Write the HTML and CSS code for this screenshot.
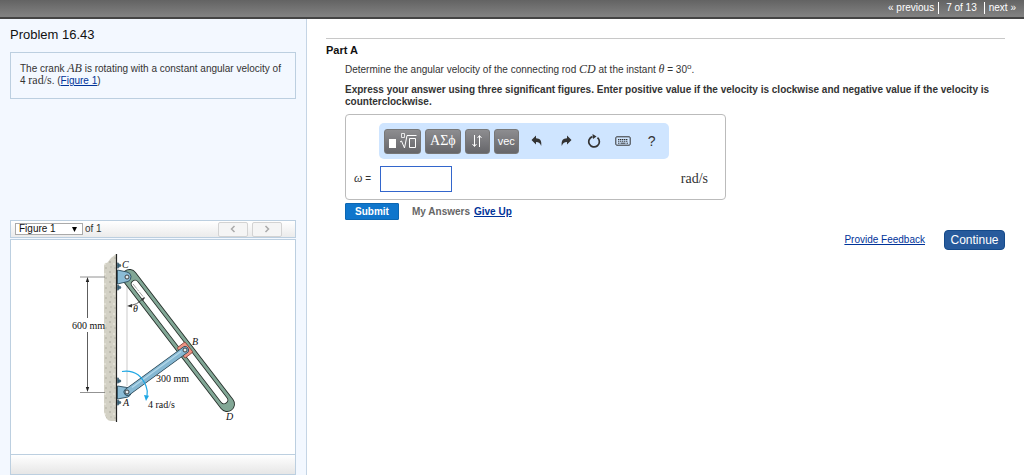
FILE: index.html
```html
<!DOCTYPE html>
<html lang="en">
<head>
    <meta charset="UTF-8">
    <meta name="viewport" content="width=device-width, initial-scale=1.0">
    <title>Problem 16.43</title>
    <link rel="stylesheet" href="styles.css">
</head>
<body>
    <nav class="topbar">
        <a href="#previous">« previous</a>
        <span class="count">7 of 13</span>
        <a href="#next">next »</a>
    </nav>

    <div class="page">
        <aside class="sidebar">
            <h1>Problem 16.43</h1>
            <div class="intro">
                The crank <i class="math">AB</i> is rotating with a constant angular velocity of 4 <span class="math">rad/s</span>. (<a href="#figure">Figure 1</a>)
            </div>

            <section class="figure" id="figure">
                <div class="figure-bar">
                    <select id="figureSelect" aria-label="Figure">
                        <option>Figure 1</option>
                    </select>
                    <label for="figureSelect">of 1</label>
                    <div class="figure-nav">
                        <button type="button" aria-label="Previous figure"><svg width="6" height="8" viewBox="0 0 6 8"><path d="M4.500 1L1.500 4l3 3"/></svg></button>
                        <button type="button" aria-label="Next figure"><svg width="6" height="8" viewBox="0 0 6 8"><path d="M1.500 1l3 3-3 3"/></svg></button>
                    </div>
                </div>
                <div class="figure-body">
                    <svg class="diagram" viewBox="11 240 284 214" role="img" aria-label="Crank AB and slotted rod CD">
                        <defs>
                            <pattern id="concrete" width="9" height="10" patternUnits="userSpaceOnUse">
                                <rect width="9" height="10" fill="#d3d1c5"/>
                                <circle cx="2" cy="2" r="0.900" fill="#b3b1a5"/>
                                <circle cx="6" cy="4" r="1" fill="#e6e4d9"/>
                                <circle cx="3" cy="7" r="0.800" fill="#bbb9ad"/>
                                <circle cx="7" cy="8" r="0.800" fill="#adab9f"/>
                            </pattern>
                        </defs>

                        <!-- wall -->
                        <path d="M116 254L111 258L107 263Q104 262 104 267V412Q106 421 111 421H116Z" fill="url(#concrete)"/>
                        <path d="M116.500 254V422" stroke="#222" stroke-width="1.200"/>

                        <!-- dimension 600 mm -->
                        <g stroke="#777" stroke-width="0.800">
                            <path d="M80 277H105M80 392.500H105"/>
                            <path d="M87.500 280V318M87.500 332V390" stroke="#333"/>
                        </g>
                        <path d="M87.500 277l-1.700 5h3.400zM87.500 392l-1.700-5h3.400z" fill="#222"/>
                        <path d="M127 283V386" stroke="#ddd" stroke-width="1.500"/>

                        <!-- rod CD -->
                        <path d="M129.500 277L227 404" stroke="#26302b" stroke-width="16" stroke-linecap="round"/>
                        <path d="M129.500 277L227 404" stroke="#82a796" stroke-width="14.200" stroke-linecap="round"/>
                        <path d="M135 284L224 400" stroke="#26302b" stroke-width="8.200" stroke-linecap="round"/>
                        <path d="M135 284L224 400" stroke="#fff" stroke-width="6.600" stroke-linecap="round"/>

                        <!-- angle -->
                        <path d="M133 284L145 299" stroke="#888" stroke-width="0.800" stroke-dasharray="6 1 2 1"/>
                        <path d="M129 306Q137 305 143 299" stroke="#333" stroke-width="0.800" fill="none"/>
                        <path d="M127 306l5-2v3.500zM145 297l-4 2 2 2z" fill="#333"/>

                        <!-- slider -->
                        <g transform="translate(185 350) rotate(52)">
                            <rect x="-6.500" y="-5" width="13" height="10" rx="1" fill="#ee9585" stroke="#7a3028" stroke-width="0.700"/>
                        </g>

                        <!-- brackets -->
                        <g fill="#8bbcd6" stroke="#29495a" stroke-width="0.900">
                            <path d="M117.500 270L127 272a5 5 0 0 1 1 9.500l-10.500 2.500zM117.500 386L127 387.500a5 5 0 0 1 1 9.500l-10.500 2z"/>
                            <g fill="#3c6c86" stroke-width="0.600">
                                <rect x="117.500" y="263" width="1" height="5"/><circle cx="119.500" cy="265.500" r="1.300"/>
                                <rect x="117.500" y="285" width="1" height="5"/><circle cx="119.500" cy="287.500" r="1.300"/>
                                <rect x="117.500" y="378" width="1" height="5"/><circle cx="119.500" cy="381" r="1.300"/>
                                <rect x="117.500" y="400" width="1" height="5"/><circle cx="119.500" cy="402.500" r="1.300"/>
                            </g>
                        </g>

                        <!-- crank AB -->
                        <path d="M127.500 392L185 350" stroke="#1f3b4a" stroke-width="7.600" stroke-linecap="round"/>
                        <path d="M127.500 392L185 350" stroke="#86b8d3" stroke-width="6.200" stroke-linecap="round"/>
                        <path d="M132 387.500L181 351.500" stroke="#b4d8e9" stroke-width="1.400"/>
                        <g fill="#e4eef2" stroke="#333" stroke-width="0.900">
                            <circle cx="127" cy="277" r="2"/>
                            <circle cx="127" cy="392" r="2"/>
                            <circle cx="185" cy="350" r="2"/>
                        </g>

                        <!-- rotation -->
                        <path d="M122 371.500Q139 369 146 386Q148 391 147 396" stroke="#1ea7e4" stroke-width="1.200" fill="none"/>
                        <path d="M146 401l-2-6 5 .8z" fill="#1ea7e4"/>

                        <g class="labels">
                            <text x="72" y="329">600 mm</text>
                            <text x="156" y="382">300 mm</text>
                            <text x="148" y="408">4 rad/s</text>
                            <g font-style="italic">
                                <text x="122" y="268">C</text>
                                <text x="133" y="312">θ</text>
                                <text x="192" y="345">B</text>
                                <text x="123" y="406">A</text>
                                <text x="226" y="420">D</text>
                            </g>
                        </g>
                    </svg>
                </div>
                <div class="figure-foot"></div>
            </section>
        </aside>

        <main class="content">
            <h2>Part A</h2>
            <div class="part">
                <p>Determine the angular velocity of the connecting rod <i class="math">CD</i> at the instant <i class="math">θ</i> = 30<sup>o</sup>.</p>
                <p class="instructions">Express your answer using three significant figures. Enter positive value if the velocity is clockwise and negative value if the velocity is counterclockwise.</p>

                <div class="answer-box">
                    <div class="toolbar">
                        <button type="button" class="key wide" aria-label="Templates">
                            <svg width="29" height="18" viewBox="0 0 29 18" fill="none" stroke="#fff">
                                <path d="M1 7h7v9H1z" fill="#fff" stroke="none"/>
                                <path d="M13.500 1.500h3v4h-3z" stroke-width="0.800"/>
                                <path d="M12 10l1.500-1 3 7L19 3.500h9.500"/>
                                <path d="M21.500 6.500h6v9h-6z"/>
                            </svg>
                        </button>
                        <button type="button" class="key wide greek">ΑΣϕ</button>
                        <button type="button" class="key" aria-label="Subscript and superscript">
                            <svg width="12" height="14" viewBox="0 0 12 14" fill="none" stroke="#fff">
                                <path d="M3.500 1v11M1.500 10l2 2.500 2-2.500M8.500 13V2M6.500 4l2-2.500 2 2.500"/>
                            </svg>
                        </button>
                        <button type="button" class="key">vec</button>
                        <button type="button" class="tool" aria-label="Undo">
                            <svg width="12" height="12" viewBox="0 0 12 12"><path d="M5 0.500V3.200C9 3.300 11 5.500 10.200 11C9.300 8 8 6.900 5 6.900V9.500L0.500 5z" fill="#333"/></svg>
                        </button>
                        <button type="button" class="tool" aria-label="Redo">
                            <svg width="12" height="12" viewBox="0 0 12 12"><path d="M7 0.500V3.200C3 3.300 1 5.500 1.800 11C2.700 8 4 6.900 7 6.900V9.500L11.500 5z" fill="#333"/></svg>
                        </button>
                        <button type="button" class="tool" aria-label="Reset">
                            <svg width="14" height="14" viewBox="0 0 14 14"><path d="M10.500 3.600A5.300 5.300 0 1 1 5.500 2.600" fill="none" stroke="#333" stroke-width="1.700"/><path d="M5.500 0L9.500 2.500 6 5z" fill="#333"/></svg>
                        </button>
                        <button type="button" class="tool" aria-label="Keyboard">
                            <svg width="16" height="10" viewBox="0 0 16 10" fill="none" stroke="#333">
                                <rect x="0.800" y="0.800" width="14.400" height="8.400" rx="1"/>
                                <path d="M3 3.500h10M3 5.200h10" stroke-dasharray="1.400 0.600"/>
                                <path d="M3 7.200h1.500M5.500 7.200h5M11.500 7.200H13"/>
                            </svg>
                        </button>
                        <button type="button" class="tool help">?</button>
                    </div>
                    <div class="answer-row">
                        <label for="answer"><i class="math">ω</i> =</label>
                        <input type="text" id="answer">
                        <span class="math unit">rad/s</span>
                    </div>
                </div>

                <div class="actions">
                    <button type="button" class="submit">Submit</button>
                    <span class="my-answers">My Answers</span>
                    <a href="#give-up">Give Up</a>
                </div>
            </div>

            <div class="footer">
                <a href="#feedback">Provide Feedback</a>
                <button type="button" class="continue">Continue</button>
            </div>
        </main>
    </div>
</body>
</html>
```
FILE: styles.css
```css
* {
    box-sizing: border-box;
}
body {
    margin: 0;
    min-height: 100vh;
    display: flex;
    flex-direction: column;
    font-family: "Liberation Sans", Arial, sans-serif;
    font-size: 10px;
    line-height: 12px;
    color: #333;
    background: #fff;
}
button, input, select {
    font-family: inherit;
    font-size: 10px;
    margin: 0;
    padding: 0;
}
a {
    color: #039;
}
svg {
    display: block;
}
.math {
    font-family: "Liberation Serif", "Times New Roman", serif;
    font-size: 12px;
    line-height: 10px;
}

/* top bar */
.topbar {
    display: flex;
    justify-content: flex-end;
    align-items: flex-start;
    height: 19px;
    padding: 2px 8px 0 0;
    background: linear-gradient(#636363, #818181 16px);
    border-bottom: 2px solid #444;
    color: #fff;
}
.topbar a {
    color: #fff;
    text-decoration: none;
}
.topbar .count {
    margin: 0 4px;
    padding: 0 7px;
    border-left: 1px solid #fff;
    border-right: 1px solid #fff;
}

.page {
    flex: 1;
    display: grid;
    grid-template-columns: 307px 1fr;
}

/* left column */
.sidebar {
    display: flex;
    flex-direction: column;
    padding: 8px 10px 0;
    background: #f3f8ff;
    border-right: 1px solid #c5d5e5;
}
h1 {
    margin: 0 0 10px;
    font-size: 13px;
    line-height: 15px;
    font-weight: normal;
    color: #111;
}
.intro {
    min-height: 47px;
    padding: 10px 9px;
    border: 1px solid #bccfe0;
}
.figure {
    margin-top: auto;
}
.figure-bar {
    display: flex;
    align-items: center;
    height: 18px;
    padding: 0 13px 0 4px;
    border: 1px solid #bccfe0;
    background: linear-gradient(#fff, #ebebeb);
}
.figure-bar select {
    width: 68px;
    height: 12px;
    padding: 0 4px 0 3px;
    border: 1px solid #aaa;
    background: #fff url("data:image/svg+xml,%3Csvg xmlns='http://www.w3.org/2000/svg' width='5' height='5'%3E%3Cpath d='M0 0h5L2.5 5z'/%3E%3C/svg%3E") no-repeat right 5px center;
    appearance: none;
    line-height: 10px;
    color: #111;
}
.figure-bar label {
    margin-left: 2px;
}
.figure-nav {
    display: flex;
    gap: 4px;
    margin-left: auto;
}
.figure-nav button {
    display: flex;
    align-items: center;
    justify-content: center;
    width: 30px;
    height: 15px;
    border: 1px solid #d3d3d3;
    border-radius: 2px;
    background: #f5f5f5;
}
.figure-nav path {
    fill: none;
    stroke: #aaa;
    stroke-width: 1.5;
}
.figure-body {
    margin-top: 1px;
    border: 1px solid #bccfe0;
    background: #fff;
}
.diagram {
    width: 100%;
}
.labels {
    font-family: "Liberation Serif", "Times New Roman", serif;
    font-size: 10px;
    fill: #111;
}
.figure-foot {
    height: 20px;
    border: 1px solid #bccfe0;
    border-top: 0;
    background: linear-gradient(#fff, #e6e6e6);
}

/* right column */
.content {
    padding: 19px 19px 0;
}
h2 {
    margin: 0;
    padding-top: 4px;
    border-top: 1px solid #c8c8c8;
    font-size: 11px;
    line-height: 14px;
    color: #111;
}
.part {
    padding: 7px 0 0 19px;
}
.part p {
    margin: 0 0 8px;
}
.part sup {
    font-size: 8px;
    line-height: 0;
}
.part .instructions {
    margin-bottom: 6px;
    font-weight: bold;
}
.answer-box {
    max-width: 381px;
    padding: 8px 8px 7px;
    border: 1px solid #bbb;
    border-radius: 4px;
}
.toolbar {
    display: flex;
    align-items: center;
    gap: 4px;
    width: 290px;
    height: 36px;
    margin-left: 25px;
    padding: 0 5px;
    border-radius: 5px;
    background: #cfe5ff;
}
.key {
    display: flex;
    align-items: center;
    justify-content: center;
    width: 25px;
    height: 25px;
    border: 1px solid #777;
    border-radius: 3px;
    background: linear-gradient(#8d8d90, #66666a);
    color: #fff;
    font-size: 11px;
}
.key.wide {
    width: 37px;
}
.key.greek {
    font-family: "Liberation Serif", "Times New Roman", serif;
    font-size: 14px;
}
.tool {
    display: flex;
    align-items: center;
    justify-content: center;
    width: 25px;
    height: 25px;
    border: 0;
    background: none;
    color: #333;
}
.tool.help {
    font-size: 14px;
}
.key + .tool {
    margin-left: 2px;
}
.answer-row {
    display: flex;
    align-items: center;
    margin-top: 7px;
}
.answer-row label {
    width: 26px;
}
.answer-row input {
    width: 72px;
    height: 26px;
    border: 1px solid #36c;
    background: #fff;
}
.unit {
    margin-left: auto;
    padding-right: 9px;
    font-size: 14px;
}
.actions {
    display: flex;
    align-items: center;
    margin-top: 3px;
}
.submit {
    width: 54px;
    height: 17px;
    margin-right: 13px;
    border: 1px solid #0b66b2;
    border-radius: 1px;
    background: #0f76cc;
    color: #fff;
    font-weight: bold;
}
.my-answers {
    margin-right: 4px;
    font-weight: bold;
    color: #666;
}
.actions a {
    font-weight: bold;
}
.footer {
    display: flex;
    align-items: center;
    justify-content: flex-end;
    gap: 19px;
    margin-top: 10px;
}
.continue {
    width: 61px;
    height: 20px;
    border: 1px solid #154a8a;
    border-radius: 4px;
    background: #275a9c;
    color: #fff;
    font-size: 12px;
}
```
